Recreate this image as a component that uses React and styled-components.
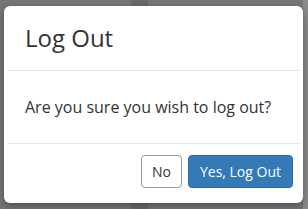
import React from "react";
import styled, { createGlobalStyle } from "styled-components";

const GlobalStyle = createGlobalStyle`
  html, body {
    margin: 0;
    padding: 0;
  }
  body {
    font-family: "Open Sans", "Noto Sans", sans-serif;
    color: #333333;
  }
`;

const Backdrop = styled.div`
  width: 308px;
  height: 209px;
  box-sizing: border-box;
  padding: 6px 5px 6px 4px;
  background: linear-gradient(
    to right,
    #767676 0,
    #767676 131px,
    #6a6a6a 131px,
    #6a6a6a 148px,
    #777777 148px,
    #777777 303px,
    #8b8b8b 303px
  );
`;

const Dialog = styled.div`
  height: 197px;
  box-sizing: border-box;
  padding: 0 3px 0 4px;
  background: #ffffff;
  border-radius: 6px;
  box-shadow: 0 3px 8px rgba(0, 0, 0, 0.35);
  display: flex;
  flex-direction: column;
`;

const Header = styled.div`
  height: 64px;
  display: flex;
  align-items: center;
  padding: 0 17px;
  border-bottom: 1px solid #e5e5e5;
`;

const Title = styled.h4`
  margin: 0;
  font-size: 24px;
  font-weight: 400;
  color: #333333;
  line-height: 1;
`;

const Body = styled.div`
  height: 72px;
  display: flex;
  align-items: center;
  padding: 0 17px;
  border-bottom: 1px solid #e5e5e5;
  font-size: 16px;
`;

const Footer = styled.div`
  flex: 1;
  display: flex;
  justify-content: flex-end;
  align-items: flex-start;
  gap: 6px;
  padding: 11px 7px 0 0;
`;

const Button = styled.button`
  height: 33px;
  padding: 0 ${(p) => (p.$primary ? "11px" : "10px")};
  font-family: inherit;
  font-size: 14px;
  border-radius: 4px;
  border: 1px solid ${(p) => (p.$primary ? "#2e6da4" : "#9a9a9a")};
  background: ${(p) => (p.$primary ? "#337ab7" : "#ffffff")};
  color: ${(p) => (p.$primary ? "#ffffff" : "#333333")};
  cursor: pointer;
`;

export default function App() {
  return (
    <>
      <GlobalStyle />
      <Backdrop>
        <Dialog>
          <Header>
            <Title>Log Out</Title>
          </Header>
          <Body>Are you sure you wish to log out?</Body>
          <Footer>
            <Button>No</Button>
            <Button $primary>Yes, Log Out</Button>
          </Footer>
        </Dialog>
      </Backdrop>
    </>
  );
}
